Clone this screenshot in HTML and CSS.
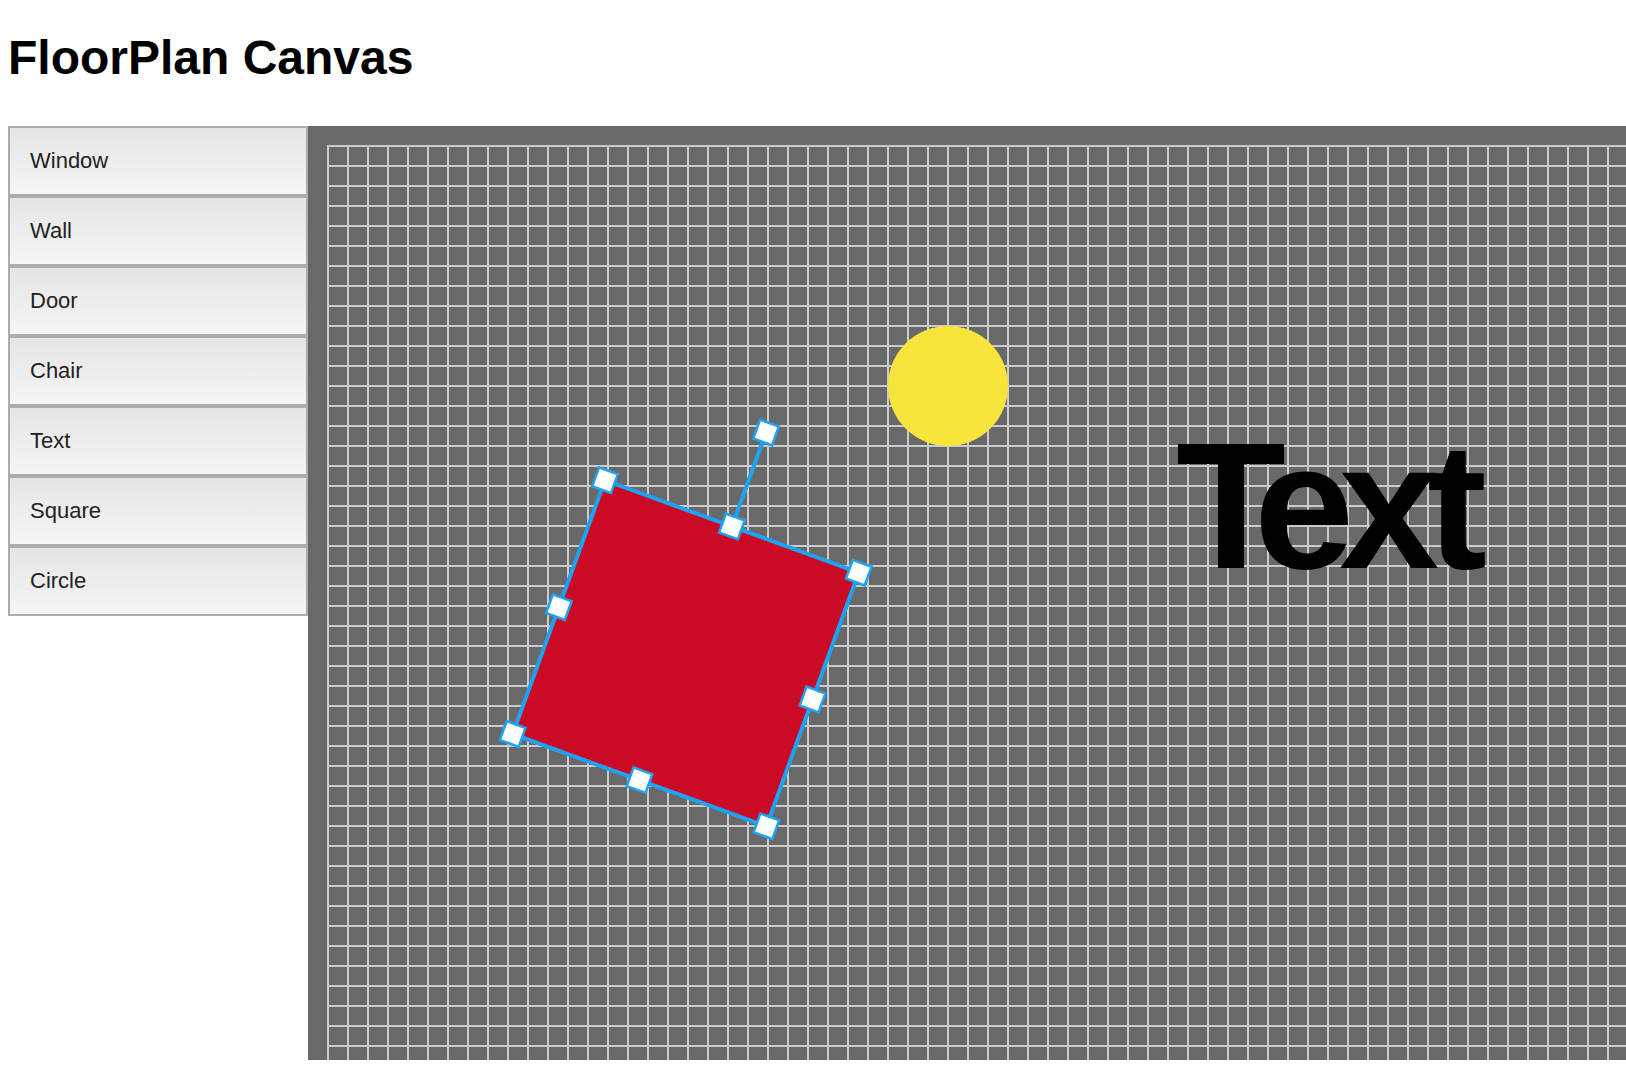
FILE: index.html
```html
<!DOCTYPE html>
<html lang="en">
<head>
<meta charset="utf-8">
<title>FloorPlan Canvas</title>
<link rel="stylesheet" href="styles.css">
</head>
<body>
  <h1 class="title">FloorPlan Canvas</h1>
  <main class="workspace">
    <nav class="toolbar">
      <button class="tool">Window</button>
      <button class="tool">Wall</button>
      <button class="tool">Door</button>
      <button class="tool">Chair</button>
      <button class="tool">Text</button>
      <button class="tool">Square</button>
      <button class="tool">Circle</button>
    </nav>
    <section class="canvas">
      <div class="grid"></div>
      <svg class="scene" width="1400" height="934" viewBox="0 0 1400 934" xmlns="http://www.w3.org/2000/svg">
        <circle cx="640" cy="260" r="60" fill="#f8e43a"/>
        <text class="label" x="868 946 1031 1119" y="442">Text</text>
        <g transform="translate(377.7 527.3) rotate(20)">
          <rect x="-134" y="-134" width="268" height="268" fill="#cb0b25"/>
          <rect x="-135" y="-135" width="270" height="270" fill="none" stroke="#1ea2f2" stroke-width="4"/>
          <line x1="0" y1="-135" x2="0" y2="-235" stroke="#1ea2f2" stroke-width="4"/>
          <g fill="#fff" stroke="#1ea2f2" stroke-width="2.5">
            <rect x="-145" y="-145" width="20" height="20"/>
            <rect x="-10" y="-145" width="20" height="20"/>
            <rect x="125" y="-145" width="20" height="20"/>
            <rect x="-145" y="-10" width="20" height="20"/>
            <rect x="125" y="-10" width="20" height="20"/>
            <rect x="-145" y="125" width="20" height="20"/>
            <rect x="-10" y="125" width="20" height="20"/>
            <rect x="125" y="125" width="20" height="20"/>
            <rect x="-10" y="-245" width="20" height="20"/>
          </g>
        </g>
      </svg>
    </section>
  </main>
</body>
</html>
```

FILE: styles.css
```css
html, body {
  margin: 0;
  padding: 0;
  overflow: hidden;
  background: #fff;
  font-family: "Liberation Sans", Arial, sans-serif;
}

.title {
  margin: 30px 0 40px 8px;
  font-size: 48px;
  line-height: 56px;
  font-weight: bold;
  color: #000;
}

.workspace {
  display: flex;
  align-items: flex-start;
  padding-left: 8px;
}

.toolbar {
  display: flex;
  flex-direction: column;
  flex: none;
  width: 300px;
}

.tool {
  box-sizing: border-box;
  height: 70px;
  width: 300px;
  margin: 0;
  padding: 0 0 0 20px;
  border: 2px solid #acacac;
  background: linear-gradient(#e5e5e5, #f5f5f5);
  font-family: "Liberation Sans", Arial, sans-serif;
  font-size: 22px;
  color: #222;
  text-align: left;
  display: flex;
  align-items: center;
}

.canvas {
  position: relative;
  flex: none;
  width: 1400px;
  height: 934px;
  background: #696969;
  overflow: hidden;
}

.grid {
  position: absolute;
  top: 19px;
  left: 19px;
  right: 0;
  bottom: 0;
  background-image:
    linear-gradient(to right, #cbcbcb 2px, transparent 2px),
    linear-gradient(to bottom, #cbcbcb 2px, transparent 2px);
  background-size: 20px 20px;
}

.scene {
  position: absolute;
  top: 0;
  left: 0;
}

.label {
  font-family: "Liberation Sans", Arial, sans-serif;
  font-weight: bold;
  font-size: 180px;
  fill: #000;
}
```
